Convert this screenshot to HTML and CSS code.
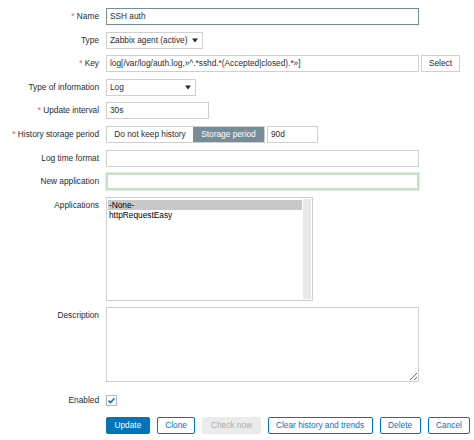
FILE: index.html
```html
<!DOCTYPE html>
<html>
<head>
<meta charset="utf-8">
<link rel="stylesheet" href="styles.css">
</head>
<body>
<form class="form">
  <div class="lbl"><span class="req">*</span> Name</div>
  <div class="ctl"><div class="inp wide focus">SSH auth</div></div>

  <div class="lbl">Type</div>
  <div class="ctl"><div class="sel w-type">Zabbix agent (active)<svg class="arr" width="6" height="5" viewBox="0 0 6 5"><path d="M0 0.5h6L3 4.5z" fill="#1f2c33"/></svg></div></div>

  <div class="lbl"><span class="req">*</span> Key</div>
  <div class="ctl row"><div class="inp wide">log[/var/log/auth.log,»^.*sshd.*(Accepted|closed).*»]</div><div class="btn-grey">Select</div></div>

  <div class="lbl">Type of information</div>
  <div class="ctl"><div class="sel w-info">Log<svg class="arr" width="6" height="5" viewBox="0 0 6 5"><path d="M0 0.5h6L3 4.5z" fill="#1f2c33"/></svg></div></div>

  <div class="lbl"><span class="req">*</span> Update interval</div>
  <div class="ctl"><div class="inp w-int">30s</div></div>

  <div class="lbl"><span class="req">*</span> History storage period</div>
  <div class="ctl row"><div class="seg"><div class="seg-item">Do not keep history</div><div class="seg-item on">Storage period</div></div><div class="inp w-days">90d</div></div>

  <div class="lbl">Log time format</div>
  <div class="ctl"><div class="inp wide"></div></div>

  <div class="lbl">New application</div>
  <div class="ctl"><div class="inp wide glow"></div></div>

  <div class="lbl">Applications</div>
  <div class="ctl"><div class="listbox"><div class="opts"><div class="opt chosen">-None-</div><div class="opt">httpRequestEasy</div></div><div class="track"></div></div></div>

  <div class="lbl">Description</div>
  <div class="ctl"><textarea class="area"></textarea></div>

  <div class="lbl enabled-lbl">Enabled</div>
  <div class="ctl enabled-ctl"><span class="check"><svg width="9" height="9" viewBox="0 0 9 9"><path d="M1.5 4.6l2 2 4-4.4" fill="none" stroke="#0275b8" stroke-width="1.5"/></svg></span></div>

  <div></div>
  <div class="ctl buttons">
    <div class="btn primary">Update</div>
    <div class="btn">Clone</div>
    <div class="btn disabled">Check now</div>
    <div class="btn">Clear history and trends</div>
    <div class="btn">Delete</div>
    <div class="btn">Cancel</div>
  </div>
</form>
</body>
</html>
```
FILE: styles.css
```css
* { box-sizing: border-box; }
html, body { margin: 0; padding: 0; background: #ffffff; }
body {
  font-family: "Liberation Sans", Arial, sans-serif;
  font-size: 8.3px;
  color: #1f2c33;
}
.form {
  display: grid;
  grid-template-columns: 99px 1fr;
  column-gap: 7px;
  row-gap: 6.6px;
  padding-top: 8px;
}
.lbl {
  text-align: right;
  line-height: 17px;
  white-space: nowrap;
}
.req { color: #e45959; }
.ctl { min-height: 17px; }
.row { display: flex; align-items: center; gap: 2px; }
.inp {
  height: 17px;
  border: 1px solid #cfcfcf;
  background: #fff;
  padding: 0 3px;
  line-height: 15px;
  white-space: nowrap;
  overflow: hidden;
}
.wide { width: 313px; }
.focus { border-color: #768d99; }
.glow {
  border: 2px solid #c6dfc6;
  box-shadow: 0 0 1px 1px #e3efe3;
}
.w-int { width: 103px; }
.w-days { width: 51px; }
.sel {
  height: 17px;
  border: 1px solid #cfcfcf;
  background: #fff;
  padding: 0 4px 0 3px;
  line-height: 15px;
  display: flex;
  align-items: center;
  justify-content: space-between;
}
.w-type { width: 97px; }
.w-info { width: 90px; }
.arr { display: block; }
.btn-grey {
  height: 17px;
  width: 39px;
  border: 1px solid #cfcfcf;
  background: #fff;
  line-height: 15px;
  text-align: center;
}
.seg {
  display: flex;
  height: 17px;
  border: 1px solid #cfcfcf;
}
.seg-item {
  line-height: 15px;
  text-align: center;
  background: #fff;
}
.seg-item:first-child { width: 86px; }
.seg-item.on {
  width: 71px;
  background: #768d99;
  color: #fff;
}
.listbox {
  width: 207px;
  height: 104px;
  border: 1px solid #cfcfcf;
  display: flex;
  padding: 2px 1px 1px 1px;
}
.opts { flex: 1; padding-right: 1px; }
.opt {
  line-height: 10px;
  padding-left: 1px;
  color: #000;
}
.opt.chosen { background: #c8c8c8; }
.track {
  width: 8px;
  background: #e8e8e8;
  margin-top: -1px;
}
.area {
  display: block;
  width: 313px;
  height: 75px;
  margin: 0;
  border: 1px solid #cfcfcf;
  resize: both;
  font: inherit;
}
.enabled-lbl, .enabled-ctl { margin-top: 3px; }
.enabled-ctl { display: flex; align-items: center; }
.check {
  width: 11px;
  height: 11px;
  border: 1px solid #aab8bf;
  background: #fff;
  display: flex;
  align-items: center;
  justify-content: center;
}
.check svg { display: block; }
.buttons {
  display: flex;
  gap: 7px;
  margin-top: 1px;
}
.btn {
  height: 17px;
  line-height: 15px;
  padding: 0 7.5px;
  border: 1px solid #0275b8;
  border-radius: 2px;
  color: #0275b8;
  background: #fff;
  white-space: nowrap;
}
.btn.primary { background: #0275b8; color: #fff; }
.btn.disabled {
  background: #ebebeb;
  border-color: #ebebeb;
  color: #acacac;
}
```
